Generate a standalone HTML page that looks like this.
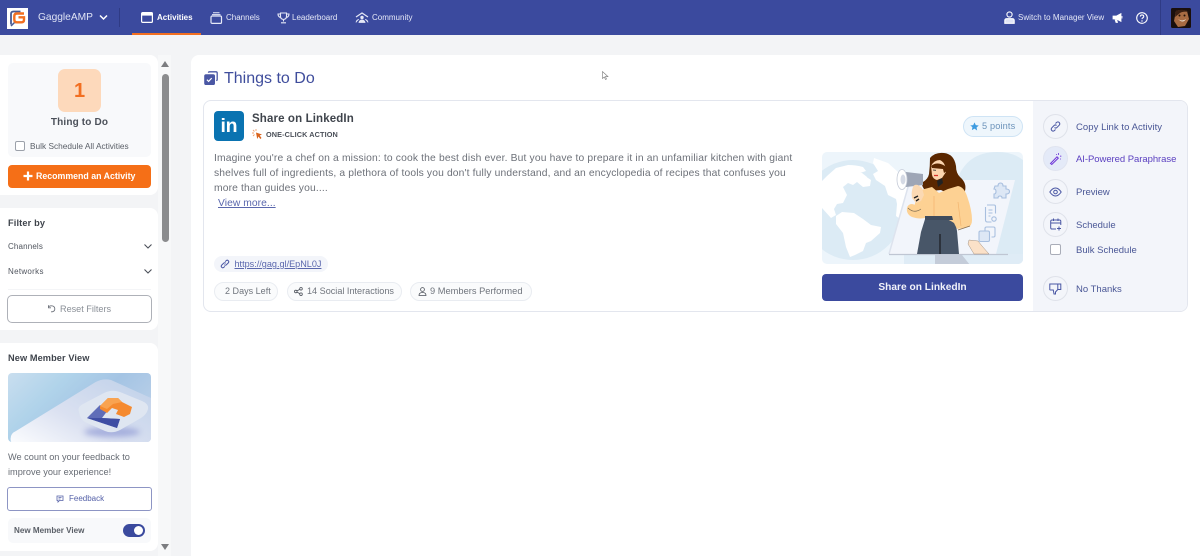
<!DOCTYPE html>
<html lang="en"><head><meta charset="utf-8"><title>Things to Do</title>
<style>
*{box-sizing:border-box}
html,body{margin:0;padding:0;width:1200px;height:556px;overflow:hidden;background:#f3f4f6;font-family:"Liberation Sans","Noto Sans CJK JP",sans-serif;color:#4b5563}
.a{position:absolute}
.t{position:absolute;white-space:nowrap;line-height:1}
svg{position:absolute;overflow:visible}
.nav{color:#e6e9f7;font-size:8px}
.act{color:#4a5796;font-size:9.5px}
.circ{position:absolute;left:1043px;width:25px;height:25px;border:1px solid #dfe2ea;border-radius:50%;background:#f3f5fa}
.chip{position:absolute;top:282px;height:19px;border:1px solid #e9ecf1;border-radius:10px;background:#fafbfc}
</style></head><body>

<!-- top nav -->
<div class="a" style="left:0;top:0;width:1200px;height:35px;background:#3b4a9e"></div>
<div class="a" style="left:7px;top:8px;width:21px;height:21px;background:#fff"></div>
<svg style="left:7px;top:8px" width="21" height="21" viewBox="0 0 21 21"><path d="M4 16.500V6q0-2.500 2.500-2.500h7" fill="none" stroke="#4a5a94" stroke-width="1.800"/><path d="M4 18l3.500-3.500h4" fill="none" stroke="#4a5a94" stroke-width="1.500"/><path d="M17 5.500H10Q7.300 5.500 7.300 8.200v3.600q0 2.500 2.700 2.500h4.500q2.500 0 2.500-2.500V9.300h-5.500" fill="none" stroke="#f26f21" stroke-width="2.400"/></svg>
<div class="t" style="left:38px;top:13px;font-size:10.200px;color:#dfe3f5">GaggleAMP</div>
<svg style="left:99px;top:14px" width="9" height="7" viewBox="0 0 9 7"><path d="M1 1.500l3.500 3.500L8 1.500" fill="none" stroke="#fff" stroke-width="1.500"/></svg>
<div class="a" style="left:119px;top:8px;width:1px;height:19px;background:#2f3b85"></div>

<svg style="left:141px;top:12px" width="12" height="11" viewBox="0 0 12 11"><rect x=".6" y=".6" width="10.800" height="9.800" rx="1" fill="none" stroke="#fff" stroke-width="1.200"/><rect x="1" y="1" width="10" height="2.600" fill="#fff"/></svg>
<div class="t nav" style="left:157px;top:14px;font-weight:700;color:#fff">Activities</div>
<div class="a" style="left:132px;top:33px;width:69px;height:2px;background:#f26f21"></div>

<svg style="left:210px;top:12px" width="13" height="12" viewBox="0 0 13 12"><rect x="1" y="4" width="10.500" height="7.400" rx="1.200" fill="none" stroke="#e6e9f7" stroke-width="1.200"/><path d="M2 2.600h8.500M3 .8h6.500" stroke="#e6e9f7" stroke-width="1"/></svg>
<div class="t nav" style="left:226px;top:14px">Channels</div>
<svg style="left:277px;top:12px" width="13" height="12" viewBox="0 0 13 12"><path d="M3.500 1h6v3.500q0 2.500-3 3-3-.5-3-3zM3.500 2H1q0 3 2.800 3.500M9.500 2H12q0 3-2.800 3.500M6.500 7.500v2M4 10.800h5" fill="none" stroke="#e6e9f7" stroke-width="1.100"/></svg>
<div class="t nav" style="left:292px;top:14px">Leaderboard</div>
<svg style="left:355px;top:12px" width="14" height="12" viewBox="0 0 14 12"><path d="M1 5L7 1l6 4" fill="none" stroke="#e6e9f7" stroke-width="1.200"/><circle cx="7" cy="5.500" r="1.700" fill="#e6e9f7"/><path d="M1 10.500q.5-3 3-3M13 10.500q-.5-3-3-3M4 10.500q.5-2.500 3-2.500t3 2.500z" fill="#e6e9f7" stroke="#e6e9f7" stroke-width=".8"/></svg>
<div class="t nav" style="left:372px;top:14px">Community</div>

<svg style="left:1004px;top:11px" width="11" height="13" viewBox="0 0 11 13"><circle cx="5.500" cy="3.500" r="2.600" fill="none" stroke="#fff" stroke-width="1.100"/><path d="M.8 12.300V9.500q0-1.800 2-1.800h5.400q2 0 2 1.800v2.800z" fill="#dfe3f5" stroke="#fff" stroke-width="1.100"/></svg>
<div class="t nav" style="left:1018px;top:14px;letter-spacing:.02px">Switch to Manager View</div>
<svg style="left:1112px;top:12px" width="12" height="12" viewBox="0 0 12 12"><path d="M1 4h3.500L9 1.500v8L4.500 7H1zM3 7.500l1 3h1.500l-.8-3M10 4v2.500" fill="#fff" stroke="#fff" stroke-width=".8"/></svg>
<svg style="left:1136px;top:12px" width="12" height="12" viewBox="0 0 12 12"><circle cx="6" cy="6" r="5.300" fill="none" stroke="#fff" stroke-width="1.100"/><path d="M4.300 4.600q.2-1.700 1.800-1.700t1.700 1.500q0 1-1.100 1.500-.7.400-.7 1.200" fill="none" stroke="#fff" stroke-width="1.100"/><circle cx="6" cy="9" r=".7" fill="#fff"/></svg>
<div class="a" style="left:1160px;top:0;width:1px;height:35px;background:#2f3b85"></div>
<svg style="left:1171px;top:8px" width="20" height="20" viewBox="0 0 20 20"><rect width="20" height="20" rx="1.500" fill="#1a0f0c"/><path d="M5 3q5-2 11 0l2 8-4 7-7 1-4-6z" fill="#a86b42"/><path d="M5 3q6-3 13 1-6-1-9 1L4 9z" fill="#3a1f12"/><path d="M7 11q4 3 8 0-3 5-8 0z" fill="#eadfcf"/><circle cx="8.500" cy="7.500" r="1" fill="#241208"/><circle cx="13.500" cy="7.500" r="1" fill="#241208"/></svg>

<!-- sidebar -->
<div class="a" style="left:0;top:55px;width:158px;height:140px;background:#fff;border-radius:0 8px 8px 0"></div>
<div class="a" style="left:8px;top:63px;width:143px;height:94px;background:#f8f9fb;border-radius:5px"></div>
<div class="a" style="left:58px;top:69px;width:43px;height:43px;background:#fdd9bb;border-radius:7px"></div>
<div class="t" style="left:58px;top:81px;width:43px;text-align:center;font-size:20px;font-weight:700;color:#f26f21">1</div>
<div class="t" style="left:8px;top:118px;width:143px;text-align:center;font-size:10px;font-weight:700;color:#4b5059;letter-spacing:.15px">Thing to Do</div>
<div class="a" style="left:15px;top:141px;width:10px;height:10px;background:#fff;border:1px solid #9ca1aa;border-radius:2px"></div>
<div class="t" style="left:30px;top:142px;font-size:8.300px;color:#5b6068">Bulk Schedule All Activities</div>
<div class="a" style="left:8px;top:165px;width:143px;height:23px;background:#f56f17;border-radius:4px"></div>
<svg style="left:23px;top:171px" width="10" height="10" viewBox="0 0 10 10"><path d="M5 .5v9M.5 5h9" stroke="#fff" stroke-width="2.200"/></svg>
<div class="t" style="left:36px;top:172px;font-size:8.800px;font-weight:700;color:#fff">Recommend an Activity</div>

<div class="a" style="left:0;top:208px;width:158px;height:122px;background:#fff;border-radius:0 8px 8px 0"></div>
<div class="t" style="left:8px;top:219px;font-size:9.200px;font-weight:700;color:#3f444c;letter-spacing:.15px">Filter by</div>
<div class="t" style="left:8px;top:243px;font-size:8px;color:#50555e;letter-spacing:.15px">Channels</div>
<svg style="left:143px;top:243px" width="10" height="7" viewBox="0 0 10 7"><path d="M1.500 1.500L5 5l3.500-3.500" fill="none" stroke="#4b5059" stroke-width="1.100"/></svg>
<div class="t" style="left:8px;top:268px;font-size:8px;color:#50555e;letter-spacing:.3px">Networks</div>
<svg style="left:143px;top:268px" width="10" height="7" viewBox="0 0 10 7"><path d="M1.500 1.500L5 5l3.500-3.500" fill="none" stroke="#4b5059" stroke-width="1.100"/></svg>
<div class="a" style="left:8px;top:289px;width:143px;height:1px;background:#f4f5f7"></div>
<div class="a" style="left:7px;top:295px;width:145px;height:28px;background:#fff;border:1px solid #aeb1b8;border-radius:5px"></div>
<svg style="left:47px;top:305px" width="9" height="8" viewBox="0 0 9 8"><path d="M1.800 1.500q2-1 4-.5 2 .8 2 3t-2.500 2.800H4M1.500 .3v2.500H4" fill="none" stroke="#6a6f78" stroke-width=".9"/></svg>
<div class="t" style="left:60px;top:305px;font-size:9.100px;color:#8a8f97">Reset Filters</div>

<div class="a" style="left:0;top:343px;width:158px;height:208px;background:#fff;border-radius:0 8px 8px 0"></div>
<div class="t" style="left:8px;top:354px;font-size:9.200px;font-weight:700;color:#3f444c;letter-spacing:.1px">New Member View</div>
<svg style="left:8px;top:373px" width="143" height="69" viewBox="0 0 143 69">
<defs>
<linearGradient id="g1" x1="0" y1="0" x2="1" y2=".5"><stop offset="0" stop-color="#c9deef"/><stop offset=".35" stop-color="#b0d3ea"/><stop offset=".65" stop-color="#a4c4e4"/><stop offset="1" stop-color="#b9cfe8"/></linearGradient>
<linearGradient id="g2" x1="0" y1="1" x2="1" y2=".2"><stop offset="0" stop-color="#fbfcfe"/><stop offset=".45" stop-color="#dbe1f1"/><stop offset="1" stop-color="#c3d3ea"/></linearGradient>
<filter id="bl" x="-30%" y="-80%" width="160%" height="260%"><feGaussianBlur stdDeviation="3"/></filter>
<clipPath id="cp"><rect width="143" height="69" rx="4"/></clipPath>
</defs>
<g clip-path="url(#cp)">
<rect width="143" height="69" fill="url(#g1)"/>
<path d="M3 69q-2-8 5-11L86 10q8-5 17-3l40 18v44z" fill="url(#g2)"/>
<ellipse cx="104" cy="59" rx="28" ry="5" fill="#8590d0" opacity=".6" filter="url(#bl)"/>
<path d="M71 39q-2-5 4-8L96 20q8-4 16-1l22 9q7 3 6 8-1 5-7 9L112 57q-8 4-15 1L77 49q-5-3-6-10z" fill="#dfe6f1"/>
<path d="M79 45L92 32l8 5-6 8 18 1-3 9z" fill="#5f6db8"/>
<path d="M79 45l15 0 18 1-3 9z" fill="#3f4ea4"/>
<path d="M92 33l8-8h10l4 4 10 5-2 7-6 3-8-3 2-4-6-2-5 5-7-4z" fill="#f58a2f"/>
<path d="M92 33l8-8h10l4 4-9 2-6 5z" fill="#f9a350"/>
</g>
</svg>
<div class="t" style="left:8px;top:453px;font-size:9.200px;color:#676c74">We count on your feedback to</div>
<div class="t" style="left:8px;top:468px;font-size:9.200px;color:#676c74">improve your experience!</div>
<div class="a" style="left:7px;top:487px;width:145px;height:24px;background:#fff;border:1px solid #8d95c4;border-radius:3px"></div>
<svg style="left:56px;top:495px" width="8" height="8" viewBox="0 0 8 8"><path d="M1 1h6v4.500H3.500L2 7V5.500H1zM2.500 2.500h3M2.500 4h2" fill="none" stroke="#5561a8" stroke-width=".8"/></svg>
<div class="t" style="left:69px;top:494.500px;font-size:8px;color:#5561a8">Feedback</div>
<div class="a" style="left:8px;top:518px;width:143px;height:25px;background:#f8f9fb;border-radius:5px"></div>
<div class="t" style="left:14px;top:526.500px;font-size:8.100px;font-weight:700;color:#5b6068">New Member View</div>
<div class="a" style="left:123px;top:524px;width:22px;height:13px;background:#3b4a9e;border-radius:7px"></div>
<div class="a" style="left:134px;top:526px;width:9px;height:9px;background:#fff;border-radius:50%"></div>

<!-- scrollbar -->
<div class="a" style="left:158px;top:55px;width:13px;height:501px;background:#f7f8f9"></div>
<div class="a" style="left:161.500px;top:74px;width:7px;height:168px;background:#8b8c8e;border-radius:4px"></div>
<div class="a" style="left:161px;top:61px;width:0;height:0;border-left:4px solid transparent;border-right:4px solid transparent;border-bottom:6px solid #7c7d80"></div>
<div class="a" style="left:161px;top:544px;width:0;height:0;border-left:4px solid transparent;border-right:4px solid transparent;border-top:6px solid #7c7d80"></div>

<!-- main -->
<div class="a" style="left:191px;top:55px;width:1009px;height:501px;background:#fff;border-radius:8px 0 0 0"></div>
<svg style="left:204px;top:71px" width="14" height="14" viewBox="0 0 14 14"><path d="M4.500 1.800q0-1 1-1h6.500q1.200 0 1.200 1.200v6.500q0 1-1 1" fill="none" stroke="#4a57a4" stroke-width="1.300"/><rect x=".2" y="3.200" width="10.800" height="10.800" rx="1.800" fill="#4a57a4"/><path d="M2.900 8.700l1.700 1.700 3.100-3.300" fill="none" stroke="#fff" stroke-width="1.200"/></svg>
<div class="t" style="left:224px;top:70.500px;font-size:16px;color:#3f4d9c">Things to Do</div>

<!-- card -->
<div class="a" style="left:203px;top:100px;width:985px;height:212px;background:#fff;border:1px solid #e3e6ee;border-radius:8px"></div>
<div class="a" style="left:1033px;top:101px;width:154px;height:210px;background:#f3f5fa;border-radius:0 7px 7px 0"></div>

<div class="a" style="left:214px;top:111px;width:30px;height:30px;background:#0a73b1;border-radius:4px"></div>
<div class="t" style="left:220.500px;top:116.500px;font-size:19.500px;font-weight:700;color:#fff;letter-spacing:-.3px">in</div>
<div class="t" style="left:252px;top:113.500px;font-size:11.500px;font-weight:700;color:#3f444c;letter-spacing:.13px">Share on LinkedIn</div>
<svg style="left:252px;top:129px" width="11" height="11" viewBox="0 0 11 11"><path d="M4 3.500l6 2-2.300 1 1.800 2.500-1.200 1L6.500 7.500 5.200 10z" fill="#d9621a"/><path d="M1 1l1.500 1.500M0 4h2M4 0v2M1 7l1.500-1.500" stroke="#f0a271" stroke-width=".9"/></svg>
<div class="t" style="left:266px;top:131px;font-size:7.300px;font-weight:700;color:#4b5059;letter-spacing:.1px">ONE-CLICK ACTION</div>

<div class="t" style="left:214px;top:154px;font-size:10.300px;color:#6d7179;letter-spacing:.15px">Imagine you're a chef on a mission: to cook the best dish ever. But you have to prepare it in an unfamiliar kitchen with giant</div>
<div class="t" style="left:214px;top:169px;font-size:10.300px;color:#6d7179;letter-spacing:.14px">shelves full of ingredients, a plethora of tools you don't fully understand, and an encyclopedia of recipes that confuses you</div>
<div class="t" style="left:214px;top:184px;font-size:10.300px;color:#6d7179;letter-spacing:.14px">more than guides you....</div>
<div class="t" style="left:218px;top:198.500px;font-size:10.300px;color:#5a67ad;text-decoration:underline;letter-spacing:.05px">View more...</div>

<div class="a" style="left:214px;top:256px;width:114px;height:16px;background:#f3f5fa;border-radius:8px"></div>
<svg style="left:220px;top:259px" width="10" height="10" viewBox="0 0 10 10"><path d="M4.300 5.700q1 1 2 .2l2-2q1-1.200 0-2.200t-2.200 0l-1 1M5.700 4.300q-1-1-2-.2l-2 2q-1 1.200 0 2.200t2.200 0l1-1" fill="none" stroke="#4a57a4" stroke-width="1"/></svg>
<div class="t" style="left:234.500px;top:260px;font-size:9.100px;color:#5a67ad;text-decoration:underline">https://gag.gl/EpNL0J</div>

<div class="chip" style="left:214px;width:64px"></div>
<div class="t" style="left:225px;top:287px;font-size:9px;color:#70757d;letter-spacing:.02px">2 Days Left</div>
<div class="chip" style="left:287px;width:115px"></div>
<svg style="left:294px;top:287px" width="9" height="9" viewBox="0 0 9 9"><circle cx="1.800" cy="4.500" r="1.300" fill="none" stroke="#4b5059" stroke-width=".8"/><circle cx="7" cy="1.800" r="1.300" fill="none" stroke="#4b5059" stroke-width=".8"/><circle cx="7" cy="7.200" r="1.300" fill="none" stroke="#4b5059" stroke-width=".8"/><path d="M3 3.900l2.800-1.500M3 5.100l2.800 1.500" stroke="#4b5059" stroke-width=".8"/></svg>
<div class="t" style="left:307px;top:287px;font-size:9.100px;color:#70757d">14 Social Interactions</div>
<div class="chip" style="left:410px;width:122px"></div>
<svg style="left:418px;top:287px" width="9" height="9" viewBox="0 0 9 9"><circle cx="4.500" cy="2.500" r="1.900" fill="none" stroke="#4b5059" stroke-width=".8"/><path d="M1 8.500q0-3 3.500-3t3.500 3z" fill="none" stroke="#4b5059" stroke-width=".8"/></svg>
<div class="t" style="left:430px;top:287px;font-size:9.300px;color:#70757d">9 Members Performed</div>

<!-- points -->
<div class="a" style="left:963px;top:116px;width:60px;height:21px;background:#eef6fc;border:1px solid #cfe4f5;border-radius:11px"></div>
<svg style="left:970px;top:122px" width="9" height="9" viewBox="0 0 24 24"><path d="M12 1l3.400 7.300 7.900 1-5.800 5.500 1.500 7.900L12 17.800 5 21.700l1.500-7.900L.7 9.300l7.900-1z" fill="#3d9be0"/></svg>
<div class="t" style="left:982px;top:122px;font-size:9.200px;color:#6c93ba;letter-spacing:.15px">5 points</div>

<!-- illustration -->
<svg style="left:822px;top:152px" width="201" height="112" viewBox="0 0 201 112">
<defs><clipPath id="ill"><rect width="201" height="112" rx="5"/></clipPath></defs>
<g clip-path="url(#ill)">
<rect width="201" height="112" fill="#edf5fb"/>
<path d="M135 28q10-28 40-28 16 0 26 8v104H135z" fill="#dcebf5"/>
<path d="M82 102h119v10H82z" fill="#dfecf6"/>
<circle cx="31" cy="58" r="50" fill="#dcebf5"/>
<path d="M0 29l5-5 9-8 12-3q8 0 15 2l3 4-6 2 5 3 6 4-1 6-7 1-6-5-4 3-5-2-5 4 4 8-4 8-6 1-3 5 2 6-5 3-9-10z" fill="#fff"/>
<path d="M34 20l6 1 5 4-2 5-8-3z" fill="#fff"/>
<path d="M14 64l6-4 12 1 9 6 8 6 10 2-1 6-9 8-5 2-3 8-8 4-5 2-4-10-3-14-7-9z" fill="#fff"/>
<path d="M52 6l14 5 10 9 10 12 4 10-5 5-1 15-6 5-4-3 1-12-1-5-8-4-3-9-9-6-3-6 5-3-5-8z" fill="#fff"/>
<path d="M88 28h105l-19 74H67z" fill="#f2f5fb"/>
<path d="M88 28L67 102" stroke="#dde3ee" stroke-width="1.500"/>
<path d="M67 102.500h119" stroke="#bfc6d3" stroke-width="1.300"/>
<path d="M113 103h27l8 10h-35z" fill="#c4ccd9"/>
<g fill="none" stroke="#a8bfdf" stroke-width="1.100">
<path d="M173 34h3q0-3 2.500-3t2.500 3h3v3q3.500 0 3.500 2.500t-3.500 2.500v4h-4q0-2-2-2t-2 2h-4v-4q2 0 2-2.500t-2-2.500z" fill="#dde7f5"/>
<path d="M165 53h7q1.500 0 1.500 1.500v7M163.500 55v13q0 2 2 2h4M166.500 58h4M166.500 61h4M166.500 64h2"/><circle cx="172" cy="67" r="2.200"/>
<path d="M163 79v-2.500q0-1.500 1.500-1.500h7q1.500 0 1.500 1.500v7q0 1.500-1.500 1.500h-2"/><rect x="157" y="79" width="10.500" height="10.500" rx="1.500" fill="#dde7f5"/>
</g>
<path d="M147 88l9 1 4 5 7 8h-15l-6-10z" fill="#fbe1c8" stroke="#8a7a6a" stroke-width=".4"/>
<path d="M104 64h28l3 15 2 23H95l4-22z" fill="#485668"/>
<path d="M118 82v20" stroke="#2a2f38" stroke-width="1.800"/>
<path d="M108 6q5-6 14-5 10 1 12 13 0 7 4 11 7 6 5 14-3 7-14 4l-10-5-10 1-7-2q-3-4-1-7 5-3 6-8 1-8 1-16z" fill="#5a2700"/>
<path d="M110 35l7 6 9-4 10-3q6 1 9 10 5 14 5 24 0 6-4 7l-11 2-3-6q-10-7-27-7-10 0-14 0l4-25z" fill="#fdd193"/>
<path d="M90 65q-6-3-5-9 1-4 5-4l4 1q4 3 11-1v13q-6 3-15 0z" fill="#fdd193"/>
<path d="M112 44v20M136 50l3 24" stroke="#f2b46f" stroke-width=".7" fill="none"/>
<path d="M103 64h27l1 4h-28z" fill="#3f4b5c"/>
<path d="M136 78l12-4" stroke="#8a6d48" stroke-width=".7"/>
<path d="M109 14q3-6 9-6 4 2 5 6l1 6-4 6-5 2q-4-1-5-5z" fill="#fcd5ae"/>
<path d="M109 14q6-5 14 0l2 5-3 2-1-4-11-1z" fill="#5a2700"/>
<path d="M111 18l3 .300" stroke="#333" stroke-width=".8"/>
<path d="M112 23.500h4" stroke="#d6332a" stroke-width="1.300"/>
<path d="M115 29l5-3 1 5-5 4z" fill="#222"/>
<path d="M84 20l17 2v11l-17 2z" fill="#9ea6b6"/>
<ellipse cx="80" cy="27.500" rx="5" ry="10" fill="#fff" stroke="#c5cbd7" stroke-width=".8"/>
<ellipse cx="81" cy="27.500" rx="2.500" ry="5" fill="#d5dae5"/>
<path d="M91 35q1-3 5-2l4 3 2 7-3 6-5 2-4-5q-1-6 1-11z" fill="#fbd9b3"/>
<path d="M92 46l4-2M94 49l3-2" stroke="#222" stroke-width="1.400"/>
<path d="M86 56q6 6 13 1" fill="none" stroke="#7c6a50" stroke-width=".7"/>
</g>
</svg>

<div class="a" style="left:822px;top:274px;width:201px;height:27px;background:#3b4a9e;border-radius:4px"></div>
<div class="t" style="left:822px;top:282.500px;width:201px;text-align:center;font-size:10.200px;font-weight:700;color:#f2f3fa">Share on LinkedIn</div>

<!-- actions -->
<div class="circ" style="top:114px"></div>
<svg style="left:1050px;top:121px" width="11" height="11" viewBox="0 0 11 11"><path d="M4.500 6.500q1 1 2.200.2l2.500-2.500q1.200-1.400 0-2.700t-2.700 0l-1 1M6.500 4.500q-1-1-2.200-.2L1.800 6.800q-1.200 1.400 0 2.700t2.700 0l1-1" fill="none" stroke="#4a57a4" stroke-width="1"/></svg>
<div class="t act" style="left:1076px;top:122.500px;letter-spacing:.05px">Copy Link to Activity</div>
<div class="circ" style="top:146px;background:#e4eaf8;border-color:#e0e4f0"></div>
<svg style="left:1049px;top:152px" width="13" height="13" viewBox="0 0 13 13"><path d="M1.500 11.500L8 4.800l1.300 1.300L2.800 12.500z" fill="none" stroke="#6d33d6" stroke-width="1"/><path d="M9.500 1v2M11.800 3.500v1.500M8 2.500H7M12 7h-1" stroke="#6d33d6" stroke-width=".8"/></svg>
<div class="t" style="left:1076px;top:154.500px;font-size:9.500px;letter-spacing:-.05px;color:#5a3fc0">AI-Powered Paraphrase</div>
<div class="circ" style="top:179px"></div>
<svg style="left:1049px;top:187px" width="13" height="10" viewBox="0 0 13 10"><path d="M.8 5Q3.500 1 6.500 1t5.700 4Q9.500 9 6.500 9T.8 5z" fill="none" stroke="#4a57a4" stroke-width="1"/><circle cx="6.500" cy="5" r="1.800" fill="none" stroke="#4a57a4" stroke-width="1"/></svg>
<div class="t act" style="left:1076px;top:187.500px">Preview</div>
<div class="circ" style="top:212px"></div>
<svg style="left:1050px;top:218px" width="12" height="13" viewBox="0 0 12 13"><path d="M6 11H2q-1.300 0-1.300-1.300V3.300Q.7 2 2 2h7.500q1.300 0 1.300 1.300V7M.7 5h10M3.500.5v2.500M8 .5v2.500M9 8.500v4M7 10.500h4" fill="none" stroke="#4a57a4" stroke-width="1"/></svg>
<div class="t act" style="left:1076px;top:220.500px">Schedule</div>
<div class="a" style="left:1050px;top:244px;width:11px;height:11px;background:#fff;border:1px solid #a9adb8;border-radius:2px"></div>
<div class="t act" style="left:1076px;top:245.500px">Bulk Schedule</div>
<div class="circ" style="top:276px"></div>
<svg style="left:1049px;top:283px" width="13" height="12" viewBox="0 0 13 12"><path d="M.8 1h8v5.500L6.500 9v2L5 11 4.300 7H1.500Q.5 7 .8 6zM8.800 1h3v5.500h-3" fill="none" stroke="#4a57a4" stroke-width="1"/></svg>
<div class="t act" style="left:1076px;top:284.500px">No Thanks</div>

<!-- cursor -->
<svg style="left:602px;top:71px" width="7" height="9" viewBox="0 0 7 9"><path d="M.5.500v7l1.800-1.500 1.200 2.500 1-.5-1.100-2.400H6z" fill="#fff" stroke="#777" stroke-width=".6"/></svg>
</body></html>
